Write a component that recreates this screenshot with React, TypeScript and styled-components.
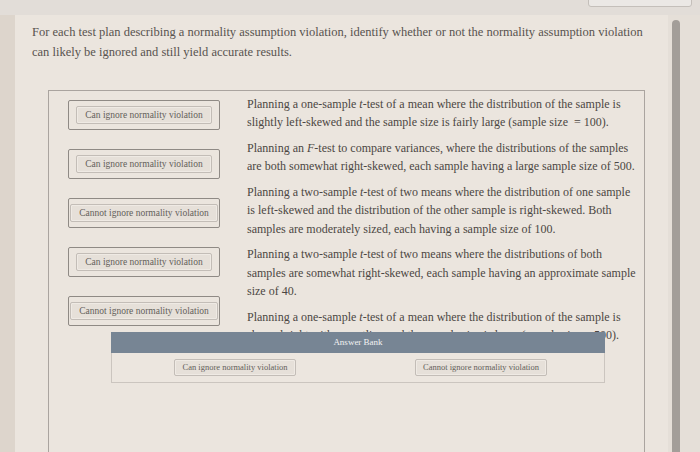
import React from "react";
import styled, { createGlobalStyle } from "styled-components";

const GlobalStyle = createGlobalStyle`
  html, body {
    margin: 0;
    padding: 0;
    background: #ddd6ce;
  }
  body {
    font-family: "Liberation Serif", "Times New Roman", serif;
  }
`;

const Screen = styled.div`
  width: 700px;
  height: 452px;
  overflow: hidden;
  display: flex;
  flex-direction: column;
  background: #ddd6ce;
`;

const TopBar = styled.div`
  height: 15px;
  flex: 0 0 15px;
  display: flex;
  justify-content: flex-end;
  align-items: flex-end;
  padding-right: 8px;
  background: #e2ddd8;
  overflow: hidden;
`;

const AttemptButton = styled.div`
  width: 104px;
  height: 22px;
  margin-bottom: 8px;
  box-sizing: border-box;
  border: 1px solid #c4bfba;
  border-radius: 3px;
  background: #ebe8e5;
`;

const MainRow = styled.div`
  flex: 1;
  display: flex;
  min-height: 0;
`;

const Gutter = styled.div`
  width: 15px;
  flex: 0 0 15px;
  background: #ddd5cc;
`;

const Panel = styled.div`
  flex: 1;
  display: flex;
  flex-direction: column;
  background: #ebe5de;
  padding: 7px 0 0 17px;
  min-width: 0;
`;

const Instruction = styled.p`
  margin: 0;
  font-size: 12.5px;
  line-height: 20px;
  color: #58534f;
  width: 625px;
`;

const QuestionBox = styled.div`
  position: relative;
  flex: 1;
  margin: 28px 0 0 16px;
  width: 597px;
  border: 1px solid #aaa49f;
  border-bottom: none;
  display: grid;
  grid-template-columns: 152px 1fr;
  column-gap: 27px;
  padding-left: 19px;
  box-sizing: border-box;
`;

const ZoneColumn = styled.div`
  display: flex;
  flex-direction: column;
  gap: 19px;
  padding-top: 9px;
`;

const DropZone = styled.div`
  height: 30px;
  box-sizing: border-box;
  border: 1px solid #8f8a85;
  border-radius: 2px;
  display: flex;
  align-items: center;
  justify-content: center;
`;

const Chip = styled.div`
  height: 18px;
  box-sizing: border-box;
  padding: 0 8px;
  border: 1px solid #c3bdb7;
  border-radius: 2px;
  background: #e6e0d9;
  box-shadow: inset 0 0 0 1px #efeae4;
  color: #645f5a;
  font-size: 9.5px;
  line-height: 16px;
  white-space: nowrap;
`;

const TextColumn = styled.div`
  display: flex;
  flex-direction: column;
  gap: 7px;
  padding-top: 3.5px;
`;

const Statement = styled.p`
  margin: 0;
  font-size: 12px;
  line-height: 18.5px;
  color: #4b4743;
  white-space: nowrap;
`;

const Bank = styled.div`
  position: absolute;
  top: 241px;
  left: 62px;
  width: 494px;
`;

const BankHeader = styled.div`
  height: 21px;
  background: #778594;
  color: #f2f2f2;
  font-size: 9px;
  line-height: 21px;
  text-align: center;
`;

const BankBody = styled.div`
  height: 30px;
  box-sizing: border-box;
  border: 1px solid #cbc5bf;
  border-top: none;
  background: #ece6df;
  display: grid;
  grid-template-columns: 1fr 1fr;
  align-items: center;
  justify-items: center;
`;

const BankChip = styled(Chip)`
  height: 17px;
  font-size: 8.5px;
  line-height: 15px;
  padding: 0 7px;
`;

const ScrollArea = styled.div`
  width: 32px;
  flex: 0 0 32px;
  background: #e5dfd8;
  padding: 5px 0 0 4px;
  box-sizing: border-box;
`;

const ScrollThumb = styled.div`
  width: 8px;
  height: 100%;
  border-radius: 4px 4px 0 0;
  background: #a39e99;
`;

const CAN = "Can ignore normality violation";
const CANNOT = "Cannot ignore normality violation";

const zones = [CAN, CAN, CANNOT, CAN, CANNOT];

export default function App() {
  return (
    <>
      <GlobalStyle />
      <Screen>
        <TopBar>
          <AttemptButton />
        </TopBar>
        <MainRow>
          <Gutter />
          <Panel>
            <Instruction>
              For each test plan describing a normality assumption violation, identify whether or not the normality assumption violation can likely be ignored and still yield accurate results.
            </Instruction>
            <QuestionBox>
              <ZoneColumn>
                {zones.map((z, i) => (
                  <DropZone key={i}>
                    <Chip>{z}</Chip>
                  </DropZone>
                ))}
              </ZoneColumn>
              <TextColumn>
                <Statement>
                  Planning a one-sample <i>t</i>-test of a mean where the distribution of the sample is
                  <br />
                  slightly left-skewed and the sample size is fairly large (sample size&nbsp; = 100).
                </Statement>
                <Statement>
                  Planning an <i>F</i>-test to compare variances, where the distributions of the samples
                  <br />
                  are both somewhat right-skewed, each sample having a large sample size of 500.
                </Statement>
                <Statement>
                  Planning a two-sample <i>t</i>-test of two means where the distribution of one sample
                  <br />
                  is left-skewed and the distribution of the other sample is right-skewed. Both
                  <br />
                  samples are moderately sized, each having a sample size of 100.
                </Statement>
                <Statement>
                  Planning a two-sample <i>t</i>-test of two means where the distributions of both
                  <br />
                  samples are somewhat right-skewed, each sample having an approximate sample
                  <br />
                  size of 40.
                </Statement>
                <Statement>
                  Planning a one-sample <i>t</i>-test of a mean where the distribution of the sample is
                  <br />
                  skewed right with an outlier, and the sample size is large (sample size = 500).
                </Statement>
              </TextColumn>
              <Bank>
                <BankHeader>Answer Bank</BankHeader>
                <BankBody>
                  <BankChip>{CAN}</BankChip>
                  <BankChip>{CANNOT}</BankChip>
                </BankBody>
              </Bank>
            </QuestionBox>
          </Panel>
          <ScrollArea>
            <ScrollThumb />
          </ScrollArea>
        </MainRow>
      </Screen>
    </>
  );
}
